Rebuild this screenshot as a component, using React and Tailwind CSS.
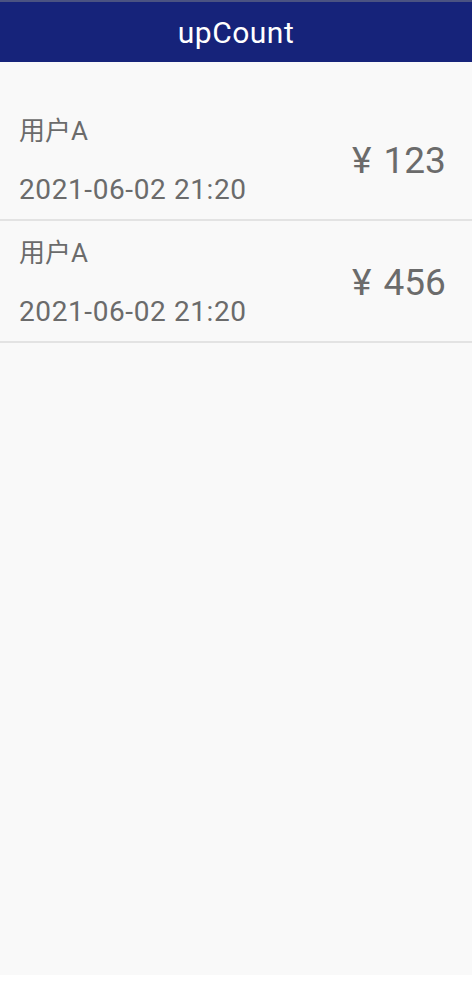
export default function App() {
  const rows = [
    { name: "用户A", time: "2021-06-02 21:20", amount: "123" },
    { name: "用户A", time: "2021-06-02 21:20", amount: "456" },
  ];
  return (
    <div
      className="w-[474px] h-[981px] bg-white overflow-hidden"
      style={{ fontFamily: 'Roboto, "Noto Sans CJK SC", sans-serif' }}
    >
      <div className="w-[472px] h-[975px] bg-[#f9f9f9] flex flex-col">
        <div className="h-[2px] bg-[#4b5382]" />
        <div className="h-[60px] bg-[#16237a] flex items-center justify-center pt-[2px]">
          <span className="text-white text-[30px] leading-none tracking-[0.5px]">upCount</span>
        </div>
        <div className="mt-[37px] flex flex-col">
          {rows.map((r, i) => (
            <div
              key={i}
              className="h-[122px] border-b-2 border-[#e3e3e3] flex items-center justify-between pl-[19px] pr-[13px]"
            >
              <div className="flex flex-col h-full pt-[17px] text-[#6b6b6b]">
                <span className="text-[26px] leading-[30px]">{r.name}</span>
                <span className="mt-[28px] text-[28px] leading-[32px] tracking-[0.6px]">{r.time}</span>
              </div>
              <div className="w-[120px] text-center text-[#6b6b6b] text-[37px] leading-none pt-[3px]">
                ¥<span className="ml-[12px]">{r.amount}</span>
              </div>
            </div>
          ))}
        </div>
      </div>
    </div>
  );
}
